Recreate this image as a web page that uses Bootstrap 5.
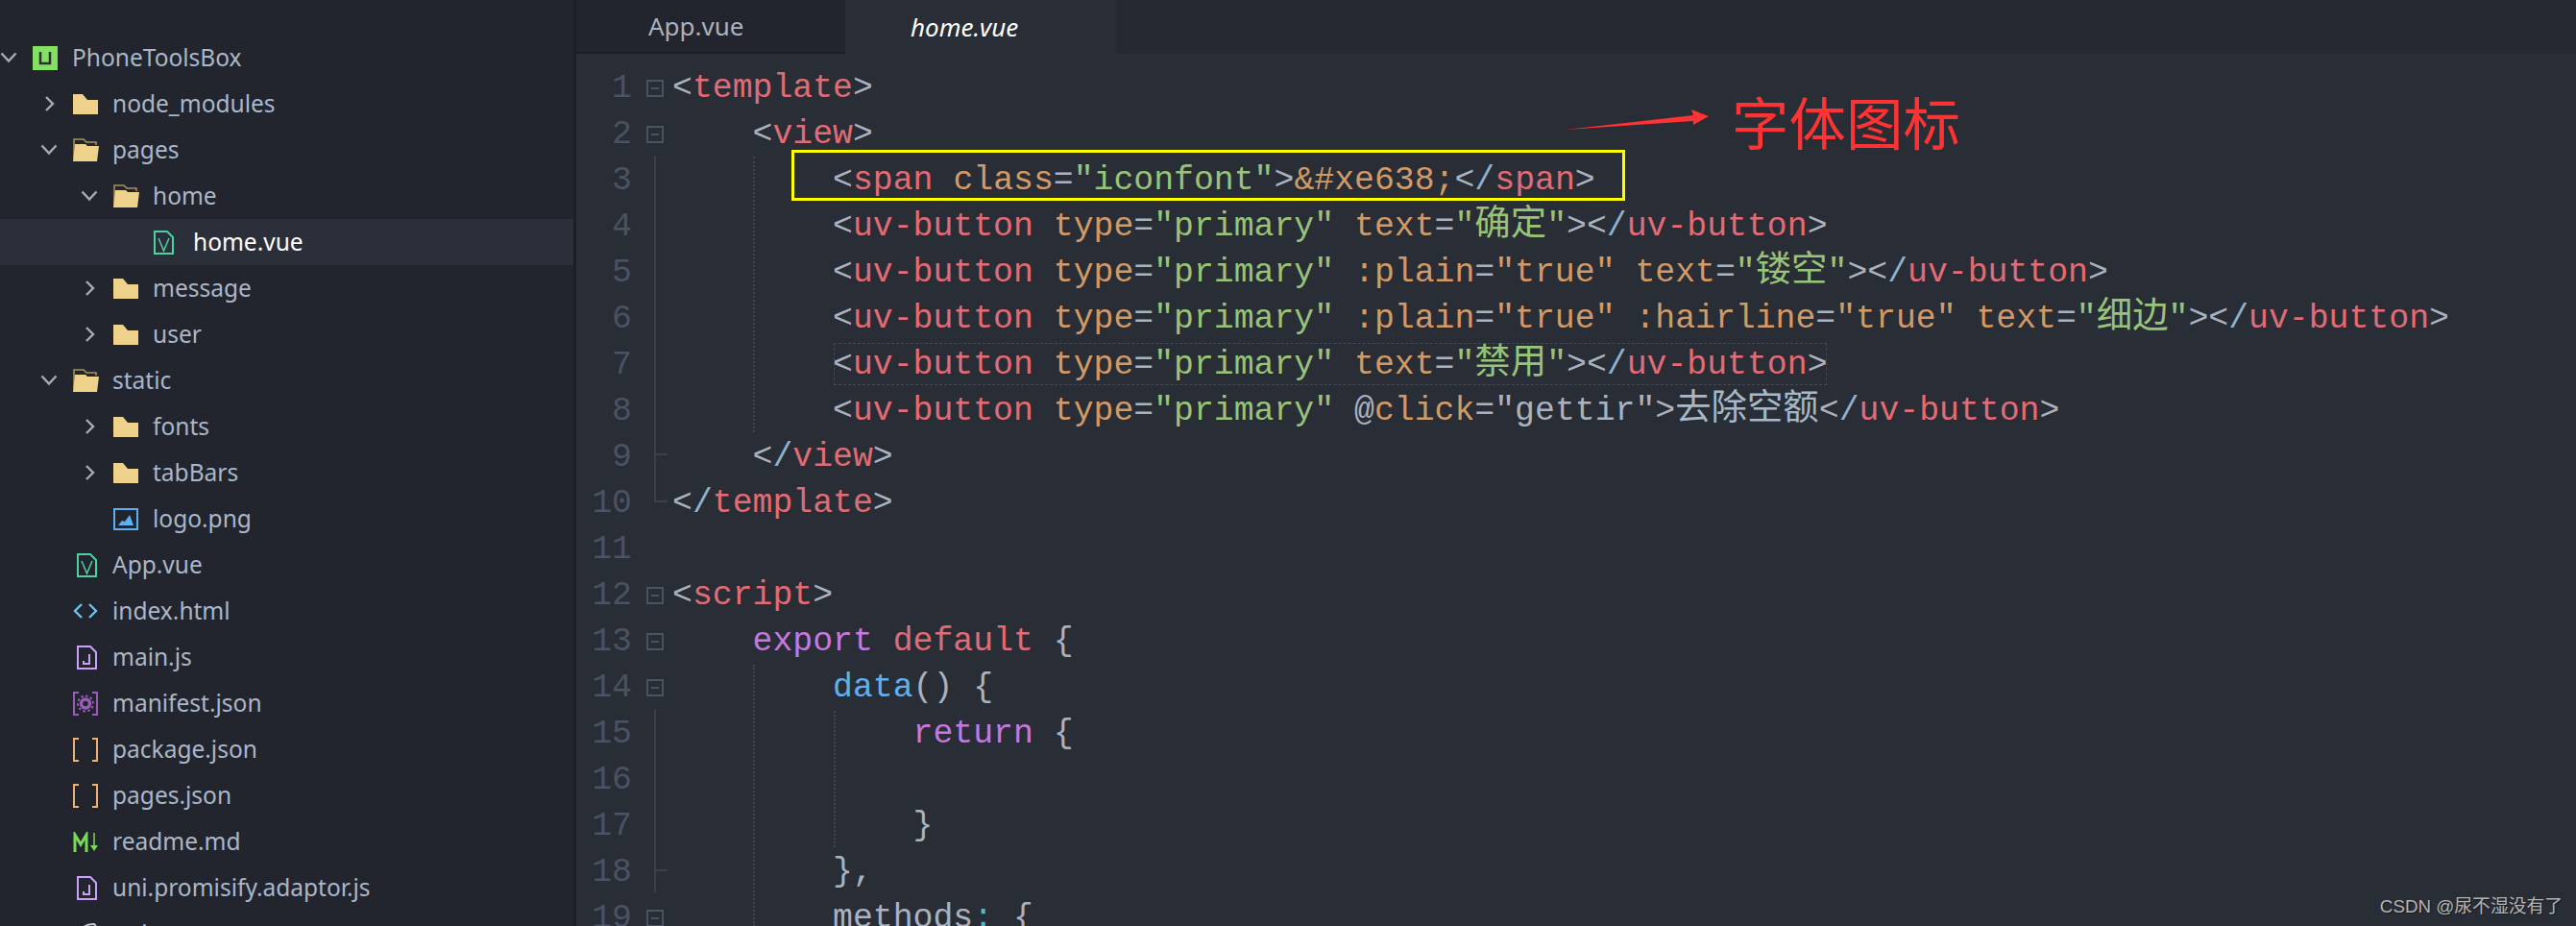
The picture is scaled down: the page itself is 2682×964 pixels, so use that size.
<!DOCTYPE html>
<html lang="zh-CN">
<head>
<meta charset="utf-8">
<title>home.vue - PhoneToolsBox</title>
<link href="https://cdn.jsdelivr.net/npm/bootstrap@5.3.0/dist/css/bootstrap.min.css" rel="stylesheet">
<style>
html,body{height:964px;overflow:hidden;background:#292d36;}
.ide{height:964px;}
.side-pane{width:597px;flex:none;background:#22252e;border-right:3px solid #1c1f26;box-sizing:content-box;padding-top:36px;overflow:hidden;font-family:"Noto Sans","Noto Sans CJK SC",sans-serif;font-size:24.5px;color:#a9b7c9;}
.tree-row{height:48px;}
.tree-row.on{background:#2b2f3a;color:#fff;}
.chev{width:34px;flex:none;display:flex;align-items:center;}
.ficon{width:41px;flex:none;display:flex;align-items:center;}
.l1{padding-left:42px}.l2{padding-left:84px}.l3{padding-left:126px}
.chev svg{fill:none;stroke:#a8adb5;stroke-width:2.4;}
.main-pane{flex:1 1 auto;min-width:0;position:relative;}
.tab-strip{height:56px;background:#252830;}
.tab-item{width:280px;height:56px;padding-left:75px;background:#22252e;border-bottom:2px solid #1b1e24;font-family:"Noto Sans",sans-serif;font-size:26px;color:#a9b2bf;}
.tab-item.on{width:283px;padding-left:68px;background:#292d36;border-bottom:0;color:#fff;font-style:italic;}
.code-area{padding-top:12px;font-family:"Liberation Mono","Noto Sans CJK SC",monospace;font-size:34.8px;line-height:48px;color:#abb2bf;}
.code-row{height:48px;white-space:pre;}
.ln{width:58px;flex:none;text-align:right;color:#4b5263;}
.fold{width:42px;flex:none;display:flex;align-items:center;padding-left:15px;}
.fold svg{fill:none;stroke:#4b5263;stroke-width:2;}
.cj{font-family:"Noto Sans CJK SC",sans-serif;font-size:37.4px;line-height:0;}
.t{color:#e06c75}.a{color:#d19a66}.s{color:#98c379}.k{color:#c678dd}.f{color:#61afef}.c{color:#56b6c2}.p{color:#abb2bf}.sl{color:#8fb3cf}.cg{color:#a6b8c8}
.rule{position:absolute;background:#3b404b;width:2px;}
.tick{position:absolute;background:#3b404b;height:2px;width:14px;left:81px;}
.dots{position:absolute;width:0;border-left:2px dotted #3f444f;}
.dash-box{position:absolute;left:268px;top:357px;width:1034px;height:44px;border:1px dashed #454a56;}
.mark-box{position:absolute;left:224px;top:156px;width:868px;height:53px;border:3px solid #ffff00;}
.mark-arrow{position:absolute;left:1030px;top:110px;}
.mark-text{position:absolute;left:1203px;top:86px;font-family:"Noto Sans CJK SC",sans-serif;font-size:59.5px;line-height:78px;color:#ff3333;}
.stamp{position:absolute;right:14px;bottom:6px;font-family:"Liberation Sans","Noto Sans CJK SC",sans-serif;font-size:18.8px;line-height:28px;color:#b4b4b4;white-space:nowrap;text-shadow:1px 1px 1px rgba(0,0,0,.45);}
</style>
</head>
<body>
<svg width="0" height="0" class="position-absolute">
  <symbol id="c-r" viewBox="0 0 12 18"><path d="M2 2l7 7-7 7"/></symbol>
  <symbol id="c-d" viewBox="0 0 18 12"><path d="M1.500 1.500l7.500 8 7.500-8"/></symbol>
  <symbol id="fd" viewBox="0 0 26 21"><path fill="#eed28c" d="M0 0h10l5 6h11v15H0z"/></symbol>
  <symbol id="fo" viewBox="0 0 27 24"><path fill="none" stroke="#a8935f" stroke-width="1.500" d="M1 21V1h10l3 3h10v3"/><path fill="#eed28c" d="M2 6h11l2 2h12l-2 16H0z"/></symbol>
  <symbol id="vf" viewBox="0 0 21 25"><path fill="none" stroke="#4fd0a0" stroke-width="2" d="M1 1h13l6 6v17H1z"/><path fill="none" stroke="#4fd0a0" stroke-width="1.500" d="M5 8l5.500 13L16 8"/></symbol>
  <symbol id="jf" viewBox="0 0 21 25"><path fill="none" stroke="#c9a0fa" stroke-width="2" d="M1 1h13l6 6v17H1z"/><path fill="none" stroke="#c9a0fa" stroke-width="2" d="M13 9v10H7v-3"/></symbol>
  <symbol id="im" viewBox="0 0 26 23"><rect x="1" y="1" width="24" height="21" fill="none" stroke="#5cb0ef" stroke-width="2"/><path fill="#5cb0ef" d="M5 18l4-5 3 1 5-7 4 11z"/></symbol>
  <symbol id="cd" viewBox="0 0 26 18"><path fill="none" stroke="#6cc3f2" stroke-width="2.400" d="M9 2L2 9l7 7M17 2l7 7-7 7"/></symbol>
  <symbol id="mf" viewBox="0 0 26 25"><path fill="none" stroke="#9a5cb8" stroke-width="2" d="M6 1H1v23h5M20 1h5v23h-5"/><circle cx="13" cy="12.500" r="4.500" fill="none" stroke="#9a5cb8" stroke-width="3.500"/><path fill="none" stroke="#9a5cb8" stroke-width="2" stroke-dasharray="2.500 2.500" d="M13 4.500a8 8 0 1 1-.01 0"/></symbol>
  <symbol id="br" viewBox="0 0 26 25"><path fill="none" stroke="#efb074" stroke-width="2" d="M6 1H1v23h5M20 1h5v23h-5"/></symbol>
  <symbol id="md" viewBox="0 0 26 21"><path fill="none" stroke="#78d858" stroke-width="3" d="M2 21V3l6 10 6-10v18"/><path fill="none" stroke="#78d858" stroke-width="1.500" d="M22 1v16"/><path fill="#78d858" d="M18 14h8l-4 6z"/></symbol>
  <symbol id="ss" viewBox="0 0 26 25"><path fill="none" stroke="#c8ccd2" stroke-width="2" d="M4 16C4 9 12 2 21 2c4 0 3 6-3 8-5 2-8 3-8 7s-4 6-6 4"/></symbol>
  <symbol id="fb" viewBox="0 0 18 18"><rect x="1" y="1" width="16" height="16"/><path d="M5 9h8"/></symbol>
</svg>

<div class="ide d-flex">
  <aside class="side-pane">
    <div class="tree-row d-flex align-items-center"><span class="chev"><svg width="18" height="12"><use href="#c-d"/></svg></span><span class="ficon"><svg width="26" height="25" viewBox="0 0 26 25"><rect width="26" height="25" fill="#84e060"/><path fill="none" stroke="#2a2e36" stroke-width="2.500" d="M8 6v12h10V6"/></svg></span><span>PhoneToolsBox</span></div>
    <div class="tree-row l1 d-flex align-items-center"><span class="chev ps-1"><svg width="12" height="18"><use href="#c-r"/></svg></span><span class="ficon"><svg width="26" height="21"><use href="#fd"/></svg></span><span>node_modules</span></div>
    <div class="tree-row l1 d-flex align-items-center"><span class="chev"><svg width="18" height="12"><use href="#c-d"/></svg></span><span class="ficon"><svg width="27" height="24"><use href="#fo"/></svg></span><span>pages</span></div>
    <div class="tree-row l2 d-flex align-items-center"><span class="chev"><svg width="18" height="12"><use href="#c-d"/></svg></span><span class="ficon"><svg width="27" height="24"><use href="#fo"/></svg></span><span>home</span></div>
    <div class="tree-row on l3 d-flex align-items-center"><span class="chev"></span><span class="ficon"><svg width="21" height="25"><use href="#vf"/></svg></span><span>home.vue</span></div>
    <div class="tree-row l2 d-flex align-items-center"><span class="chev ps-1"><svg width="12" height="18"><use href="#c-r"/></svg></span><span class="ficon"><svg width="26" height="21"><use href="#fd"/></svg></span><span>message</span></div>
    <div class="tree-row l2 d-flex align-items-center"><span class="chev ps-1"><svg width="12" height="18"><use href="#c-r"/></svg></span><span class="ficon"><svg width="26" height="21"><use href="#fd"/></svg></span><span>user</span></div>
    <div class="tree-row l1 d-flex align-items-center"><span class="chev"><svg width="18" height="12"><use href="#c-d"/></svg></span><span class="ficon"><svg width="27" height="24"><use href="#fo"/></svg></span><span>static</span></div>
    <div class="tree-row l2 d-flex align-items-center"><span class="chev ps-1"><svg width="12" height="18"><use href="#c-r"/></svg></span><span class="ficon"><svg width="26" height="21"><use href="#fd"/></svg></span><span>fonts</span></div>
    <div class="tree-row l2 d-flex align-items-center"><span class="chev ps-1"><svg width="12" height="18"><use href="#c-r"/></svg></span><span class="ficon"><svg width="26" height="21"><use href="#fd"/></svg></span><span>tabBars</span></div>
    <div class="tree-row l2 d-flex align-items-center"><span class="chev"></span><span class="ficon"><svg width="26" height="23"><use href="#im"/></svg></span><span>logo.png</span></div>
    <div class="tree-row l1 d-flex align-items-center"><span class="chev"></span><span class="ficon ps-1"><svg width="21" height="25"><use href="#vf"/></svg></span><span>App.vue</span></div>
    <div class="tree-row l1 d-flex align-items-center"><span class="chev"></span><span class="ficon"><svg width="26" height="18"><use href="#cd"/></svg></span><span>index.html</span></div>
    <div class="tree-row l1 d-flex align-items-center"><span class="chev"></span><span class="ficon ps-1"><svg width="21" height="25"><use href="#jf"/></svg></span><span>main.js</span></div>
    <div class="tree-row l1 d-flex align-items-center"><span class="chev"></span><span class="ficon"><svg width="26" height="25"><use href="#mf"/></svg></span><span>manifest.json</span></div>
    <div class="tree-row l1 d-flex align-items-center"><span class="chev"></span><span class="ficon"><svg width="26" height="25"><use href="#br"/></svg></span><span>package.json</span></div>
    <div class="tree-row l1 d-flex align-items-center"><span class="chev"></span><span class="ficon"><svg width="26" height="25"><use href="#br"/></svg></span><span>pages.json</span></div>
    <div class="tree-row l1 d-flex align-items-center"><span class="chev"></span><span class="ficon"><svg width="26" height="21"><use href="#md"/></svg></span><span>readme.md</span></div>
    <div class="tree-row l1 d-flex align-items-center"><span class="chev"></span><span class="ficon ps-1"><svg width="21" height="25"><use href="#jf"/></svg></span><span>uni.promisify.adaptor.js</span></div>
    <div class="tree-row l1 d-flex align-items-center"><span class="chev"></span><span class="ficon"><svg width="26" height="25"><use href="#ss"/></svg></span><span>uni.scss</span></div>
  </aside>

  <main class="main-pane">
    <div class="tab-strip d-flex">
      <div class="tab-item d-flex align-items-center">App.vue</div>
      <div class="tab-item on d-flex align-items-center">home.vue</div>
    </div>
    <div class="code-area">
      <div class="code-row d-flex"><span class="ln">1</span><span class="fold"><svg width="18" height="18"><use href="#fb"/></svg></span><span><span class="p">&lt;</span><span class="t">template</span><span class="p">&gt;</span></span></div>
      <div class="code-row d-flex"><span class="ln">2</span><span class="fold"><svg width="18" height="18"><use href="#fb"/></svg></span><span>    <span class="p">&lt;</span><span class="t">view</span><span class="p">&gt;</span></span></div>
      <div class="code-row d-flex"><span class="ln">3</span><span class="fold"></span><span>        <span class="p">&lt;</span><span class="t">span</span> <span class="a">class</span><span class="p">=</span><span class="s">"iconfont"</span><span class="p">&gt;</span><span class="a">&amp;#xe638;</span><span class="p">&lt;</span><span class="sl">/</span><span class="t">span</span><span class="p">&gt;</span></span></div>
      <div class="code-row d-flex"><span class="ln">4</span><span class="fold"></span><span>        <span class="p">&lt;</span><span class="t">uv-button</span> <span class="a">type</span><span class="p">=</span><span class="s">"primary"</span> <span class="a">text</span><span class="p">=</span><span class="s">"<span class="cj">确定</span>"</span><span class="p">&gt;&lt;</span><span class="sl">/</span><span class="t">uv-button</span><span class="p">&gt;</span></span></div>
      <div class="code-row d-flex"><span class="ln">5</span><span class="fold"></span><span>        <span class="p">&lt;</span><span class="t">uv-button</span> <span class="a">type</span><span class="p">=</span><span class="s">"primary"</span> <span class="a">:plain</span><span class="p">=</span><span class="a">"true"</span> <span class="a">text</span><span class="p">=</span><span class="s">"<span class="cj">镂空</span>"</span><span class="p">&gt;&lt;</span><span class="sl">/</span><span class="t">uv-button</span><span class="p">&gt;</span></span></div>
      <div class="code-row d-flex"><span class="ln">6</span><span class="fold"></span><span>        <span class="p">&lt;</span><span class="t">uv-button</span> <span class="a">type</span><span class="p">=</span><span class="s">"primary"</span> <span class="a">:plain</span><span class="p">=</span><span class="a">"true"</span> <span class="a">:hairline</span><span class="p">=</span><span class="a">"true"</span> <span class="a">text</span><span class="p">=</span><span class="s">"<span class="cj">细边</span>"</span><span class="p">&gt;&lt;</span><span class="sl">/</span><span class="t">uv-button</span><span class="p">&gt;</span></span></div>
      <div class="code-row d-flex"><span class="ln">7</span><span class="fold"></span><span>        <span class="p">&lt;</span><span class="t">uv-button</span> <span class="a">type</span><span class="p">=</span><span class="s">"primary"</span> <span class="a">text</span><span class="p">=</span><span class="s">"<span class="cj">禁用</span>"</span><span class="p">&gt;&lt;</span><span class="sl">/</span><span class="t">uv-button</span><span class="p">&gt;</span></span></div>
      <div class="code-row d-flex"><span class="ln">8</span><span class="fold"></span><span>        <span class="p">&lt;</span><span class="t">uv-button</span> <span class="a">type</span><span class="p">=</span><span class="s">"primary"</span> <span class="p">@</span><span class="a">click</span><span class="p">=</span><span class="p">"gettir"</span><span class="p">&gt;</span><span class="cj cg">去除空额</span><span class="p">&lt;</span><span class="sl">/</span><span class="t">uv-button</span><span class="p">&gt;</span></span></div>
      <div class="code-row d-flex"><span class="ln">9</span><span class="fold"></span><span>    <span class="p">&lt;</span><span class="sl">/</span><span class="t">view</span><span class="p">&gt;</span></span></div>
      <div class="code-row d-flex"><span class="ln">10</span><span class="fold"></span><span><span class="p">&lt;</span><span class="sl">/</span><span class="t">template</span><span class="p">&gt;</span></span></div>
      <div class="code-row d-flex"><span class="ln">11</span><span class="fold"></span><span></span></div>
      <div class="code-row d-flex"><span class="ln">12</span><span class="fold"><svg width="18" height="18"><use href="#fb"/></svg></span><span><span class="p">&lt;</span><span class="t">script</span><span class="p">&gt;</span></span></div>
      <div class="code-row d-flex"><span class="ln">13</span><span class="fold"><svg width="18" height="18"><use href="#fb"/></svg></span><span>    <span class="k">export</span> <span class="t">default</span> <span class="p">{</span></span></div>
      <div class="code-row d-flex"><span class="ln">14</span><span class="fold"><svg width="18" height="18"><use href="#fb"/></svg></span><span>        <span class="f">data</span><span class="p">()</span> <span class="p">{</span></span></div>
      <div class="code-row d-flex"><span class="ln">15</span><span class="fold"></span><span>            <span class="k">return</span> <span class="p">{</span></span></div>
      <div class="code-row d-flex"><span class="ln">16</span><span class="fold"></span><span></span></div>
      <div class="code-row d-flex"><span class="ln">17</span><span class="fold"></span><span>            <span class="p">}</span></span></div>
      <div class="code-row d-flex"><span class="ln">18</span><span class="fold"></span><span>        <span class="p">},</span></span></div>
      <div class="code-row d-flex"><span class="ln">19</span><span class="fold"><svg width="18" height="18"><use href="#fb"/></svg></span><span>        <span class="p">methods</span><span class="c">:</span> <span class="p">{</span></span></div>
    </div>

    <span class="rule" style="left:81px;top:162px;height:360px"></span>
    <span class="tick" style="top:472px"></span>
    <span class="tick" style="top:521px"></span>
    <span class="rule" style="left:81px;top:738px;height:191px"></span>
    <span class="tick" style="top:905px"></span>
    <span class="dots" style="left:184px;top:163px;height:287px"></span>
    <span class="dots" style="left:184px;top:692px;height:272px"></span>
    <span class="dots" style="left:268px;top:740px;height:142px"></span>
    <span class="dash-box"></span>
    <span class="mark-box"></span>
    <svg class="mark-arrow" width="152" height="28" viewBox="0 0 152 28"><path fill="#ff3333" d="M0 25L133 10 131 4 149 11 133 20 133 16z"/></svg>
    <span class="mark-text">字体图标</span>
    <span class="stamp">CSDN @尿不湿没有了</span>
  </main>
</div>
<script src="https://cdn.jsdelivr.net/npm/bootstrap@5.3.0/dist/js/bootstrap.bundle.min.js"></script>
</body>
</html>
